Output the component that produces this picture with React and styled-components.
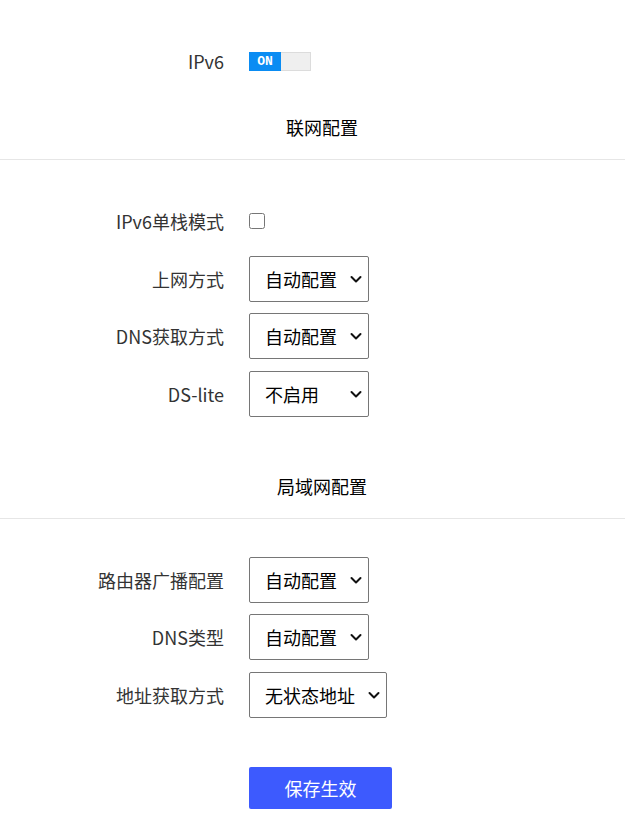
import React from "react";
import styled, { createGlobalStyle } from "styled-components";

const Global = createGlobalStyle`
  html, body { margin: 0; padding: 0; background: #fff; }
  body { font-family: "Noto Sans CJK SC", "Noto Sans", sans-serif; }
`;

const Page = styled.div`
  width: 625px;
  padding-top: 38px;
  padding-bottom: 19px;
`;

const Row = styled.div`
  display: grid;
  grid-template-columns: 224px auto;
  column-gap: 25px;
  align-items: center;
  height: 46px;
`;

const Label = styled.label`
  text-align: right;
  font-size: 18px;
  line-height: 24px;
  color: #333;
  white-space: nowrap;
`;

const Control = styled.div`
  display: flex;
  align-items: center;
`;

const Toggle = styled.div`
  display: flex;
  width: 62px;
  height: 19px;
  box-sizing: border-box;
`;

const ToggleOn = styled.span`
  width: 32px;
  height: 19px;
  background: #0a8cf3;
  color: #fff;
  font-family: "Liberation Mono", "DejaVu Sans Mono", monospace;
  font-weight: bold;
  font-size: 13px;
  line-height: 19px;
  text-align: center;
`;

const ToggleOff = styled.span`
  flex: 1;
  height: 19px;
  box-sizing: border-box;
  background: #efefef;
  border: 1px solid #dcdcdc;
  border-left: none;
`;

const SectionHeader = styled.div`
  margin-top: ${(p) => p.$top}px;
  padding-bottom: 20px;
  border-bottom: 1px solid #e6e6e6;
  text-align: center;
  font-size: 18px;
  line-height: 24px;
  color: #000;
  padding-left: 19px;
`;

const Group = styled.div`
  display: flex;
  flex-direction: column;
  gap: 11.5px;
  padding-top: 38px;
`;

const Check = styled.input`
  width: 16px;
  height: 16px;
  margin: 0;
`;

const SelectWrap = styled.div`
  position: relative;
  display: inline-flex;
`;

const Select = styled.select`
  appearance: none;
  -webkit-appearance: none;
  height: 46px;
  box-sizing: border-box;
  font-family: "Noto Sans CJK SC", "Noto Sans", sans-serif;
  font-size: 18px;
  color: #000;
  background: #fff;
  border: 1px solid #767676;
  border-radius: 2px;
  padding: 0 31px 0 15px;
  outline: none;
`;

const Chevron = styled.svg`
  position: absolute;
  right: 7px;
  top: 50%;
  width: 12px;
  height: 12px;
  margin-top: -6px;
  pointer-events: none;
`;

const ButtonRow = styled.div`
  display: grid;
  grid-template-columns: 224px auto;
  column-gap: 25px;
  margin-top: 49px;
`;

const SaveButton = styled.button`
  grid-column: 2;
  justify-self: start;
  width: 143px;
  height: 42px;
  border: none;
  border-radius: 2px;
  background: #3d5afe;
  color: #fff;
  font-family: "Noto Sans CJK SC", "Noto Sans", sans-serif;
  font-size: 18px;
  cursor: pointer;
`;

function SelectRow({ label, options }) {
  return (
    <Row>
      <Label>{label}</Label>
      <Control>
        <SelectWrap>
          <Select defaultValue={options[0]}>
            {options.map((o) => (
              <option key={o}>{o}</option>
            ))}
          </Select>
          <Chevron viewBox="0 0 12 12">
            <path
              d="M1.5 4 L6 8.5 L10.5 4"
              fill="none"
              stroke="#111"
              strokeWidth="2"
              strokeLinecap="round"
              strokeLinejoin="round"
            />
          </Chevron>
        </SelectWrap>
      </Control>
    </Row>
  );
}

export default function App() {
  return (
    <>
      <Global />
      <Page>
        <Row>
          <Label>IPv6</Label>
          <Control>
            <Toggle>
              <ToggleOn>ON</ToggleOn>
              <ToggleOff />
            </Toggle>
          </Control>
        </Row>

        <SectionHeader $top={31}>联网配置</SectionHeader>
        <Group>
          <Row>
            <Label>IPv6单栈模式</Label>
            <Control>
              <Check type="checkbox" />
            </Control>
          </Row>
          <SelectRow label="上网方式" options={["自动配置", "手动配置"]} />
          <SelectRow label="DNS获取方式" options={["自动配置", "手动配置"]} />
          <SelectRow label="DS-lite" options={["不启用", "自动配置", "手动配置"]} />
        </Group>

        <SectionHeader $top={57}>局域网配置</SectionHeader>
        <Group>
          <SelectRow label="路由器广播配置" options={["自动配置", "手动配置"]} />
          <SelectRow label="DNS类型" options={["自动配置", "手动配置"]} />
          <SelectRow label="地址获取方式" options={["无状态地址", "有状态地址"]} />
        </Group>

        <ButtonRow>
          <SaveButton>保存生效</SaveButton>
        </ButtonRow>
      </Page>
    </>
  );
}
